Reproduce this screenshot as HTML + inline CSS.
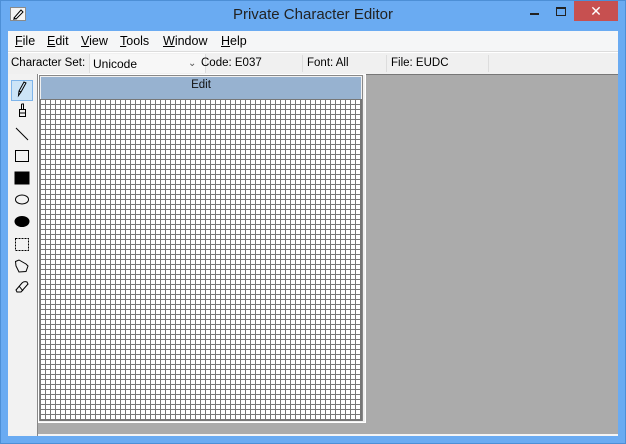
<!DOCTYPE html>
<html><head><style>
*{margin:0;padding:0;box-sizing:border-box}
body{width:626px;height:444px;background:#6aabf2;position:relative;overflow:hidden;font-family:"Liberation Sans",sans-serif;font-size:12px;color:#000}
.a{position:absolute}
u{text-decoration:underline}
</style></head><body>
<div class="a" style="left:0;top:0;width:626px;height:444px;border:1px solid #4d8fd6"></div>
<div class="a" style="left:10px;top:7px;width:16px;height:14px;background:#f4f4f4;border:1px solid #8a8a8a"></div>
<svg class="a" style="left:10px;top:7px" width="16" height="14"><path d="M4 11 L11 3 L13 5 L6 12 Z" fill="#fff" stroke="#000" stroke-width="1"/><path d="M4 11 L3 13 L6 12" fill="#000"/></svg>
<div class="a" style="left:0;top:6px;width:626px;text-align:center;font-size:15px;color:#222">Private Character Editor</div>
<div class="a" style="left:530px;top:13px;width:9px;height:2px;background:#222"></div>
<div class="a" style="left:556px;top:7px;width:10px;height:9px;border:1px solid #222;border-top-width:2px"></div>
<div class="a" style="left:574px;top:1px;width:44px;height:20px;background:#c75050;color:#fff;text-align:center;font-size:14px;line-height:20px">✕</div>
<div class="a" style="left:8px;top:31px;width:610px;height:405px;background:#f0f0f0"></div>
<div class="a" style="left:8px;top:31px;width:610px;height:20px;background:#f5f6f7;font-size:12.5px;line-height:20px">
<span class="a" style="left:7px"><u>F</u>ile</span>
<span class="a" style="left:39px"><u>E</u>dit</span>
<span class="a" style="left:73px"><u>V</u>iew</span>
<span class="a" style="left:112px"><u>T</u>ools</span>
<span class="a" style="left:155px"><u>W</u>indow</span>
<span class="a" style="left:213px"><u>H</u>elp</span>
</div>
<div class="a" style="left:8px;top:51px;width:610px;height:2px;border-top:1px solid #dcdcdc;border-bottom:1px solid #fff"></div>
<div class="a" style="left:8px;top:53px;width:610px;height:21px;background:#f0f0f0;font-size:11.5px;line-height:21px">
<span class="a" style="left:3px">Character Set:</span>
<div class="a" style="left:81px;top:1px;width:117px;height:19px;background:#f7f7f7;border-left:1px solid #ddd;border-right:1px solid #ddd"></div>
<span class="a" style="left:85px;top:1px;font-size:12px">Unicode</span>
<span class="a" style="left:180px;top:0;font-size:10px;color:#555">⌄</span>
<span class="a" style="left:193px">Code: E037</span>
<div class="a" style="left:294px;top:2px;width:1px;height:17px;background:#ddd"></div>
<span class="a" style="left:299px">Font: All</span>
<div class="a" style="left:378px;top:2px;width:1px;height:17px;background:#ddd"></div>
<span class="a" style="left:383px">File: EUDC</span>
<div class="a" style="left:480px;top:2px;width:1px;height:17px;background:#ddd"></div>
</div>
<div class="a" style="left:8px;top:74px;width:30px;height:362px;background:#f2f2f2;border-right:1px solid #888"></div>
<div class="a" style="left:11px;top:80px;width:22px;height:21px;background:#cce4f7;border:1px solid #7eb4ea"></div>
<svg class="a" style="left:8px;top:74px" width="30" height="230" fill="none" stroke="#000" stroke-width="1">
<path d="M10.5 21.5 L11 17 L16 8 L18 9 L13 18 Z M11 17 L13 18"/>
<path d="M13.5 30 L15.5 30 L15.5 35 M13.5 30 L13.5 35 M11.5 35.5 H17.5 V42.5 H11.5 Z M11 39 H18" />
<path d="M8 54 L20 66"/>
<rect x="7.5" y="76.5" width="13" height="11"/>
<rect x="7" y="98" width="14" height="12" fill="#000"/>
<ellipse cx="14" cy="125.5" rx="6.5" ry="4.5"/>
<ellipse cx="14" cy="147.5" rx="7" ry="5" fill="#000"/>
<rect x="7.5" y="164.5" width="13" height="12" stroke-dasharray="2 1"/>
<path d="M7.5 187.5 L11 186 L18 190 L20 192 L18 197.5 L11 198 L8 192 Z"/>
<path d="M8 216 L14 209 Q16 207 19 208 L20 210 L13 218 L9 218 Z M11 212 L15 217"/>
</svg>
<div class="a" style="left:38px;top:74px;width:580px;height:360px;background:#ababab;border-top:1px solid #777"></div>
<div class="a" style="left:38px;top:434px;width:580px;height:2px;background:#f4f4f4"></div>
<div class="a" style="left:38px;top:74px;width:328px;height:349px;background:#f0f0f0;border:1px solid #fff"></div>
<div class="a" style="left:39px;top:75px;width:324px;height:346px;border:1px solid #888"></div>
<div class="a" style="left:41px;top:77px;width:320px;height:23px;background:#97b2d0;text-align:center;font-size:11.5px;line-height:16px;color:#111">Edit</div>
<div class="a" style="left:40px;top:99px;width:322px;height:322px;background-color:#fff;
background-image:linear-gradient(90deg,#777 1px,transparent 1px),linear-gradient(180deg,#777 1px,transparent 1px);
background-size:5px 5px;border-right:1px solid #777;border-bottom:1px solid #777"></div>
</body></html>
